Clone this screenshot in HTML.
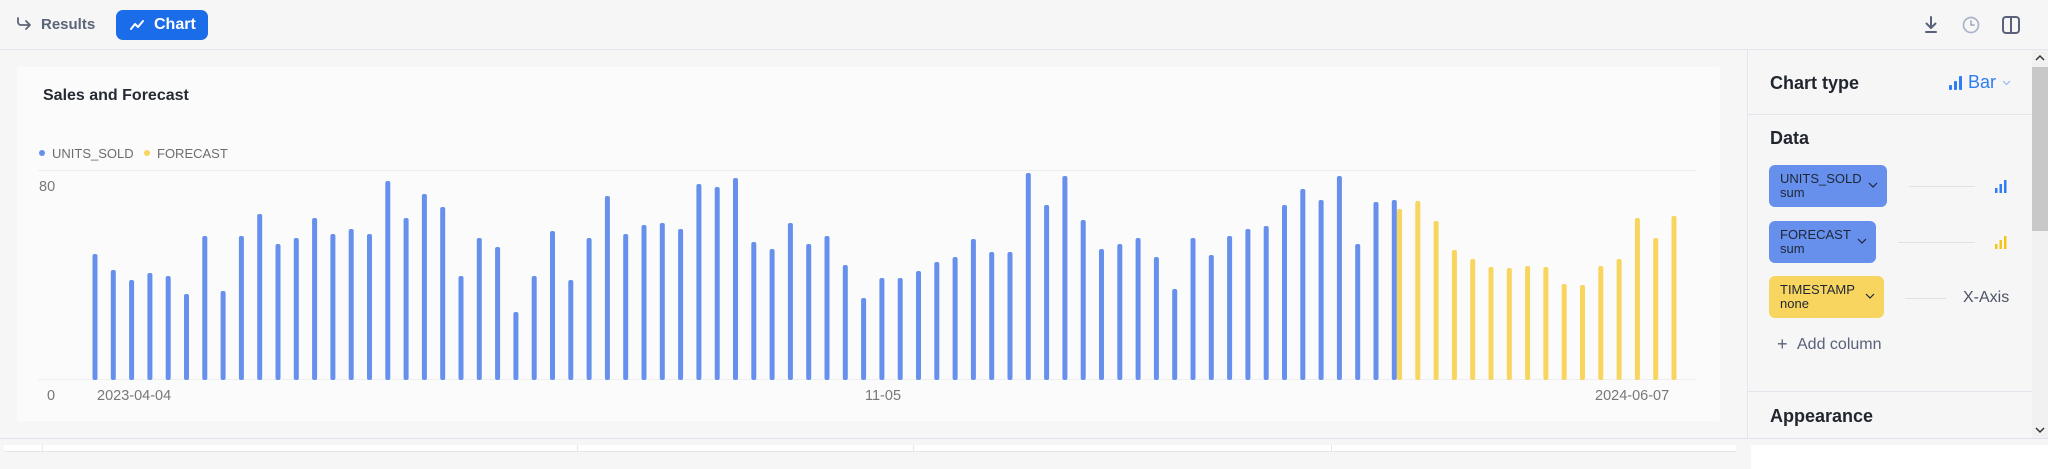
<!DOCTYPE html>
<html><head><meta charset="utf-8"><style>
*{margin:0;padding:0;box-sizing:border-box}
body{width:2048px;height:469px;overflow:hidden;background:#f6f6f6;font-family:"Liberation Sans",sans-serif;position:relative}
.a{position:absolute}
.t{font-size:14.5px;color:#777}
.pill{position:absolute;left:1769px;border-radius:6px;height:42px;padding:7px 0 0 11px;font-size:13px;line-height:14px;color:#1e2537}
.pill .c{position:absolute;right:9px;top:17px}
</style></head><body>
<div class="a" style="left:0;top:49px;width:2048px;height:1px;background:#e3e4ec"></div>
<svg class="a" style="left:15px;top:16px" width="18" height="16" viewBox="0 0 18 16"><path d="M3 2v4a3 3 0 0 0 3 3h9M11 5l4 4-4 4" fill="none" stroke="#5b6478" stroke-width="1.8" stroke-linecap="round" stroke-linejoin="round"/></svg>
<div class="a" style="left:41px;top:16px;font-size:15px;font-weight:bold;color:#5b6478">Results</div>
<div class="a" style="left:116px;top:10px;width:92px;height:30px;background:#1b6ce8;border-radius:7px"></div>
<svg class="a" style="left:129px;top:18px" width="16" height="14" viewBox="0 0 16 14"><path d="M2 11l4-5 3 3 5-6" fill="none" stroke="#fff" stroke-width="2" stroke-linecap="round" stroke-linejoin="round"/></svg>
<div class="a" style="left:154px;top:16px;font-size:16px;font-weight:bold;color:#fff">Chart</div>
<svg class="a" style="left:1922px;top:15px" width="18" height="20" viewBox="0 0 18 20"><path d="M9 2v11M4.5 8.5L9 13l4.5-4.5M4 17h10" fill="none" stroke="#59627a" stroke-width="2" stroke-linecap="round" stroke-linejoin="round"/></svg>
<svg class="a" style="left:1962px;top:16px" width="18" height="18" viewBox="0 0 18 18"><circle cx="9" cy="9" r="7.5" fill="none" stroke="#a9b3c9" stroke-width="1.7"/><path d="M9 5v4h3" fill="none" stroke="#a9b3c9" stroke-width="1.7" stroke-linecap="round"/></svg>
<svg class="a" style="left:2002px;top:16px" width="18" height="18" viewBox="0 0 18 18"><rect x="1" y="1" width="16" height="16" rx="3" fill="none" stroke="#59627a" stroke-width="2"/><path d="M9 1v16" stroke="#59627a" stroke-width="2"/></svg>
<div class="a" style="left:17px;top:67px;width:1703px;height:354px;background:#fbfbfb;border-radius:3px"></div>
<div class="a" style="left:43px;top:87px;font-size:16px;font-weight:bold;color:#262a33">Sales and Forecast</div>
<div class="a" style="left:39px;top:150px;width:6px;height:6px;border-radius:50%;background:#6690ec"></div>
<div class="a" style="left:52px;top:146px;font-size:13px;color:#6d6d6d">UNITS_SOLD</div>
<div class="a" style="left:144px;top:150px;width:6px;height:6px;border-radius:50%;background:#f8d55e"></div>
<div class="a" style="left:157px;top:146px;font-size:13px;color:#6d6d6d">FORECAST</div>
<div class="a t" style="left:39px;top:179px">80</div>
<div class="a t" style="left:47px;top:388px">0</div>
<div class="a t" style="left:97px;top:388px">2023-04-04</div>
<div class="a t" style="left:865px;top:388px">11-05</div>
<div class="a t" style="left:1595px;top:388px">2024-06-07</div>
<svg class="a" style="left:0;top:0" width="1720" height="400" id="ch"><line x1="38" y1="170.5" x2="1697" y2="170.5" stroke="#eeeeee"/><line x1="38" y1="379.5" x2="1697" y2="379.5" stroke="#eeeeee"/></svg>
<div class="a" style="left:0;top:438px;width:2048px;height:1px;background:#e0e1ea"></div>
<div class="a" style="left:4px;top:445px;width:1732px;height:7px;background:#fff;border-bottom:1px solid #e6e6e6"></div>
<div class="a" style="left:42px;top:445px;width:1px;height:7px;background:#e6e6e6"></div>
<div class="a" style="left:577px;top:445px;width:1px;height:7px;background:#e6e6e6"></div>
<div class="a" style="left:913px;top:445px;width:1px;height:7px;background:#e6e6e6"></div>
<div class="a" style="left:1331px;top:445px;width:1px;height:7px;background:#e6e6e6"></div>
<div class="a" style="left:1751px;top:445px;width:297px;height:24px;background:#fff"></div>
<div class="a" style="left:1747px;top:50px;width:1px;height:388px;background:#e3e4ec"></div>
<div class="a" style="left:1748px;top:114px;width:284px;height:1px;background:#e3e4ec"></div>
<div class="a" style="left:1748px;top:391px;width:284px;height:1px;background:#e3e4ec"></div>
<div class="a" style="left:2032px;top:50px;width:16px;height:388px;background:#f1f1f1"></div>
<div class="a" style="left:2032px;top:67px;width:16px;height:164px;background:#c8c8c8"></div>
<svg class="a" style="left:2035px;top:54px" width="10" height="8"><path d="M1 6l4-4 4 4" fill="none" stroke="#333" stroke-width="1.5"/></svg>
<svg class="a" style="left:2035px;top:426px" width="10" height="8"><path d="M1 2l4 4 4-4" fill="none" stroke="#333" stroke-width="1.5"/></svg>
<div class="a" style="left:1770px;top:73px;font-size:18px;font-weight:bold;color:#22262f">Chart type</div>
<svg class="a" style="left:1948px;top:75px" width="14" height="16"><rect x="1" y="10" width="3" height="5" rx="1" fill="#2e7cf6"/><rect x="6" y="6" width="3" height="9" rx="1" fill="#2e7cf6"/><rect x="11" y="1" width="3" height="14" rx="1" fill="#2e7cf6"/></svg>
<div class="a" style="left:1968px;top:72px;font-size:18px;color:#2e7cf6">Bar</div>
<svg class="a" style="left:2002px;top:80px" width="9" height="6"><path d="M1 1l3.5 3.5L8 1" fill="none" stroke="#9bb8ee" stroke-width="1.2"/></svg>
<div class="a" style="left:1770px;top:128px;font-size:18px;font-weight:bold;color:#22262f">Data</div>
<div class="pill" style="top:165px;width:118px;background:#6690ec">UNITS_SOLD<br>sum<svg class="c" width="10" height="6"><path d="M1 1l4 4 4-4" fill="none" stroke="#1e2537" stroke-width="1.2"/></svg></div>
<div class="a" style="left:1909px;top:186px;width:66px;height:1px;background:#dfe1e8"></div>
<svg class="a" style="left:1995px;top:179px" width="12" height="14"><rect x="0" y="9" width="2.5" height="5" fill="#2e7cf6"/><rect x="4.5" y="5" width="2.5" height="9" fill="#2e7cf6"/><rect x="9" y="1" width="2.5" height="13" fill="#2e7cf6"/></svg>
<div class="pill" style="top:221px;width:107px;background:#6690ec">FORECAST<br>sum<svg class="c" width="10" height="6"><path d="M1 1l4 4 4-4" fill="none" stroke="#1e2537" stroke-width="1.2"/></svg></div>
<div class="a" style="left:1898px;top:242px;width:77px;height:1px;background:#dfe1e8"></div>
<svg class="a" style="left:1995px;top:235px" width="12" height="14"><rect x="0" y="9" width="2.5" height="5" fill="#f5c518"/><rect x="4.5" y="5" width="2.5" height="9" fill="#f5c518"/><rect x="9" y="1" width="2.5" height="13" fill="#f5c518"/></svg>
<div class="pill" style="top:276px;width:115px;background:#f8d55e">TIMESTAMP<br>none<svg class="c" width="10" height="6"><path d="M1 1l4 4 4-4" fill="none" stroke="#1e2537" stroke-width="1.2"/></svg></div>
<div class="a" style="left:1905px;top:298px;width:41px;height:1px;background:#dfe1e8"></div>
<div class="a" style="left:1963px;top:289px;font-size:16px;color:#4d5466">X-Axis</div>
<div class="a" style="left:1777px;top:334px;font-size:18px;color:#59627a">+</div>
<div class="a" style="left:1797px;top:336px;font-size:16px;color:#59627a">Add column</div>
<div class="a" style="left:1770px;top:406px;font-size:18px;font-weight:bold;color:#22262f">Appearance</div>
<script>
var b=[254,270,280,273,276,294,236,291,236,214,244,238,218,234,229,234,181,218,194,207,276,238,247,312,276,231,280,238,196,234,225,223,229,184,187,178,242,249,223,244,236,265,298,278,278,271,262,257,239,252,252,173,205,176,220,249,244,238,257,289,238,255,236,229,226,205,189,200,176,244,202,200];
var y=[209,201,221,250,259,267,268,266,267,284,285,266,259,218,238,216];
var s=document.getElementById('ch'),h='';
b.forEach(function(t,i){var x=95+i*18.3;h+='<rect x="'+(x-2.5).toFixed(1)+'" y="'+t+'" width="5" height="'+(380-t)+'" rx="2" fill="#6690ec"/>';});
y.forEach(function(t,i){var x=1399.5+i*18.3;h+='<rect x="'+(x-2.5).toFixed(1)+'" y="'+t+'" width="5" height="'+(380-t)+'" rx="2" fill="#f8d55e"/>';});
s.insertAdjacentHTML('beforeend',h);
</script>
</body></html>
